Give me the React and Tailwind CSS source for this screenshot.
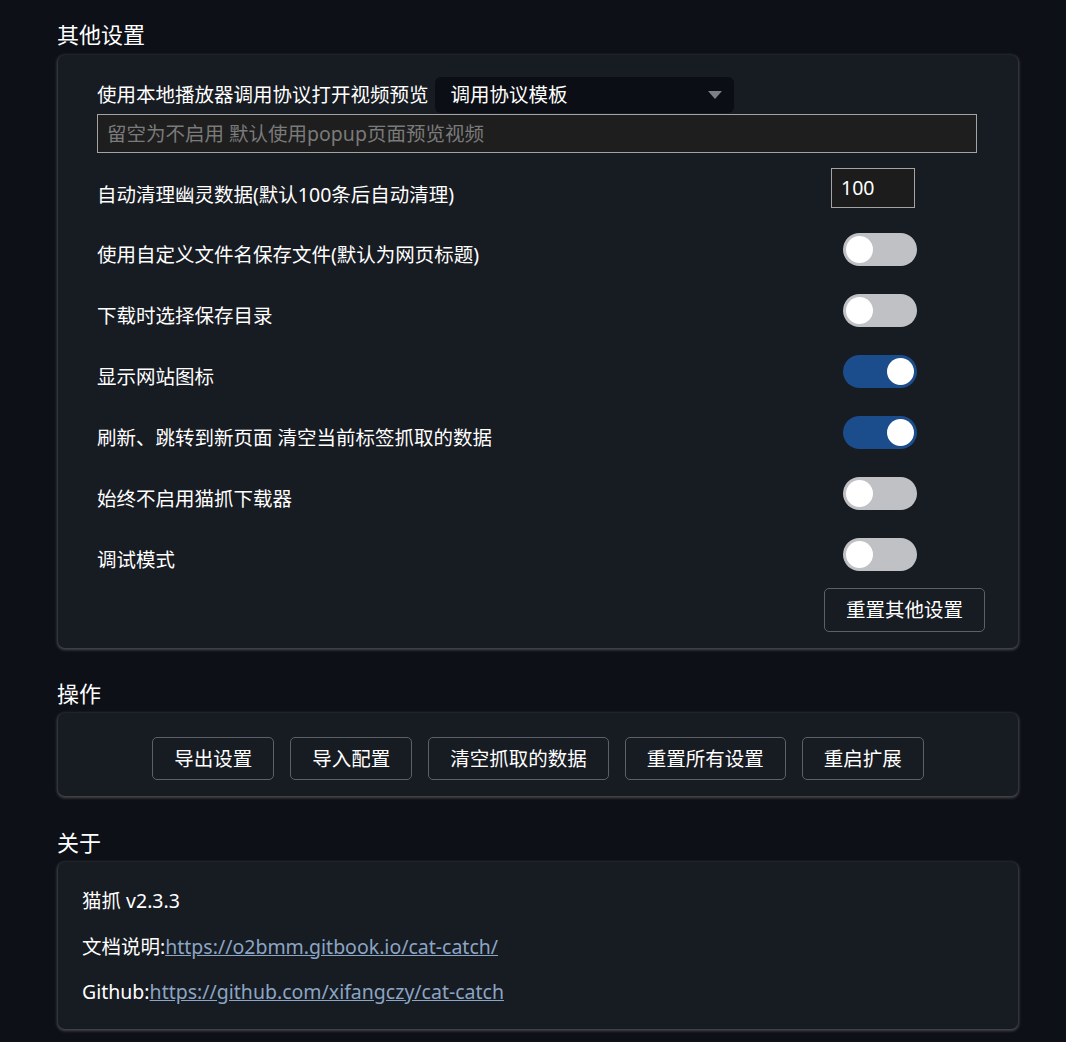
import React from 'react'

const font = { fontFamily: '"Noto Sans", "Noto Sans CJK SC", sans-serif' }

function Toggle({ on }) {
    return (
        <div className={`w-[74px] h-[33px] rounded-full p-[3px] flex ${on ? 'bg-[#1b4c8c] justify-end' : 'bg-[#bfc1c5] justify-start'}`}>
            <div className="w-[27px] h-[27px] rounded-full bg-white" />
        </div>
    )
}

function ToggleRow({ label, on }) {
    return (
        <div className="w-[820px] h-[61px] flex items-center justify-between">
            <span className="mt-[10px]">{label}</span>
            <Toggle on={on} />
        </div>
    )
}

function Card({ className, children }) {
    return (
        <div className={`w-[960px] rounded-[7px] bg-[#171b22] shadow-[0_1px_3px_1px_rgba(120,120,120,0.55)] ${className}`}>
            {children}
        </div>
    )
}

function Btn({ children }) {
    return (
        <button className="h-[43px] px-[21px] rounded-[5px] border border-[#5d6167] text-white leading-none">
            {children}
        </button>
    )
}

export default function App() {
    return (
        <div className="min-h-screen bg-[#0d1017] text-white text-[19.5px] pl-[58px] pt-[19px] pb-[12px]" style={font}>

            {/* 其他设置 */}
            <h2 className="text-[22px] leading-[30px] -ml-[1px] mb-[6px]">其他设置</h2>
            <Card className="pt-[22px] pl-[39px] pb-[16px]">
                <div className="flex items-center">
                    <span className="leading-[36px]">使用本地播放器调用协议打开视频预览</span>
                    <div className="ml-[6px] w-[299px] h-[36px] rounded-md bg-[#0b0e14] flex items-center justify-between pl-[16px] pr-[12px]">
                        <span>调用协议模板</span>
                        <svg width="14" height="8" viewBox="0 0 14 8"><path d="M0 0h14L7 8z" fill="#7d7f84" /></svg>
                    </div>
                </div>
                <div className="mt-[1px] w-[880px] h-[39px] border border-[#a3a3a3] bg-[#1e1e1e] flex items-center pl-[9px] text-[#7a7a7a]">
                    留空为不启用 默认使用popup页面预览视频
                </div>

                <div className="w-[818px] h-[51px] mt-[15px] flex items-start justify-between">
                    <span className="mt-[13px] leading-[28px]">自动清理幽灵数据(默认100条后自动清理)</span>
                    <div className="w-[84px] h-[40px] border border-[#a3a3a3] bg-[#1c1c1c] flex items-center pl-[9px]">100</div>
                </div>

                <ToggleRow label="使用自定义文件名保存文件(默认为网页标题)" />
                <ToggleRow label="下载时选择保存目录" />
                <ToggleRow label="显示网站图标" on />
                <ToggleRow label="刷新、跳转到新页面 清空当前标签抓取的数据" on />
                <ToggleRow label="始终不启用猫抓下载器" />
                <ToggleRow label="调试模式" />

                <div className="flex justify-end pr-[33px] mt-[3px]">
                    <button className="h-[44px] w-[161px] rounded-[5px] border border-[#5d6167] leading-none">重置其他设置</button>
                </div>
            </Card>

            {/* 操作 */}
            <h2 className="text-[22px] leading-[30px] -ml-[1px] mt-[30px] mb-[5px]">操作</h2>
            <Card className="pt-[24px] pb-[16px] flex justify-center gap-[16px]">
                <Btn>导出设置</Btn>
                <Btn>导入配置</Btn>
                <Btn>清空抓取的数据</Btn>
                <Btn>重置所有设置</Btn>
                <Btn>重启扩展</Btn>
            </Card>

            {/* 关于 */}
            <h2 className="text-[22px] leading-[30px] -ml-[1px] mt-[31px] mb-[5px]">关于</h2>
            <Card className="pt-[16px] pb-[14px] pl-[24px]">
                <p className="leading-[45.5px]">猫抓 v2.3.3</p>
                <p className="leading-[45.5px]">文档说明:<a href="#" className="text-[#8ba5c4] underline">https://o2bmm.gitbook.io/cat-catch/</a></p>
                <p className="leading-[45.5px]">Github:<a href="#" className="text-[#8ba5c4] underline">https://github.com/xifangczy/cat-catch</a></p>
            </Card>
        </div>
    )
}
